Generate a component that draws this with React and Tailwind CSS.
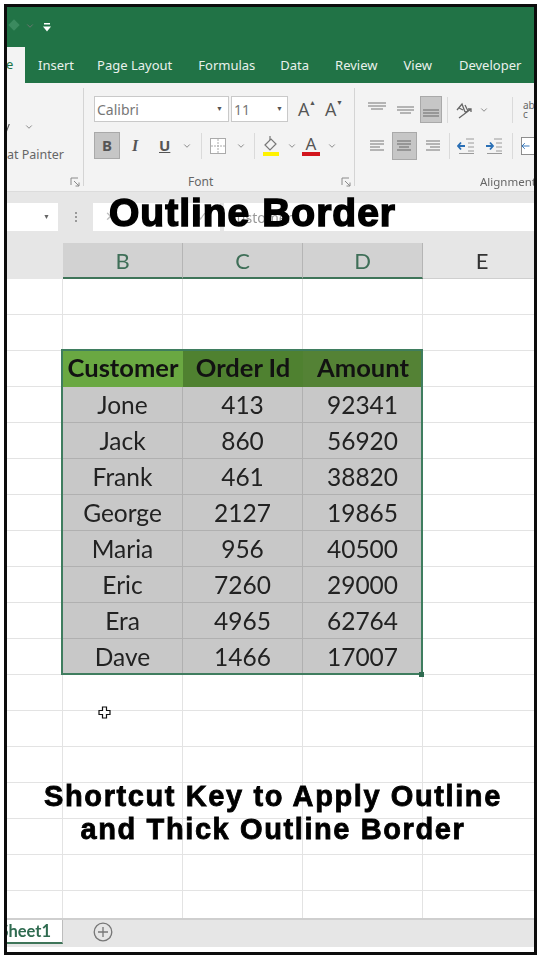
import { ChevronDown } from 'lucide-react'

const tabs = [
  ['Insert', 'ml-[13px]'],
  ['Page Layout', 'ml-[23px]'],
  ['Formulas', 'ml-[26px]'],
  ['Data', 'ml-[25px]'],
  ['Review', 'ml-[26px]'],
  ['View', 'ml-[26px]'],
  ['Developer', 'ml-[27px]'],
]

const datos = [
  ['Jone', '413', '92341'],
  ['Jack', '860', '56920'],
  ['Frank', '461', '38820'],
  ['George', '2127', '19865'],
  ['Maria', '956', '40500'],
  ['Eric', '7260', '29000'],
  ['Era', '4965', '62764'],
  ['Dave', '1466', '17007'],
]

// ─── Iconos del ribbon ────────────────────────────────────────
function Chevron({ className = '' }) {
  return <ChevronDown size={10} strokeWidth={2} className={`shrink-0 text-[#777] ${className}`} />
}

function Lineas({ filas, color = '#8a8a8a', w = 20, h = 20 }) {
  return (
    <svg width={w} height={h} viewBox={`0 0 ${w} ${h}`}>
      {filas.map(([x1, x2, y], i) => (
        <line key={i} x1={x1} x2={x2} y1={y} y2={y} stroke={color} strokeWidth="1.2" />
      ))}
    </svg>
  )
}

function Launcher() {
  return (
    <svg width="10" height="10" viewBox="0 0 10 10" fill="none" stroke="#8a8a8a">
      <path d="M1 8V1h7" />
      <path d="M4 4l5 5M9 5.500V9H5.500" />
    </svg>
  )
}

function Separador({ className = '' }) {
  return <div className={`w-px shrink-0 bg-[#dadada] ${className}`} />
}

function Sangria({ invertida }) {
  return (
    <svg width="18" height="18" viewBox="0 0 18 18" fill="none">
      <path d="M9 2h8M11 6h6M11 10h6M11 14h6M2 16.500h15" stroke="#9a9a9a" strokeWidth="1" />
      {invertida ? (
        <path d="M1 9h7M4 5.500L1 9l3 3.500" stroke="#2a6fb5" strokeWidth="1.800" />
      ) : (
        <path d="M1 9h7M5 5.500L8 9l-3 3.500" stroke="#2a6fb5" strokeWidth="1.800" />
      )}
    </svg>
  )
}

function LetraA({ flecha }) {
  return (
    <div className="relative w-[16px] text-[18px] leading-none text-[#555] font-['Open_Sans',sans-serif]">
      A
      <span className="absolute right-[-2px] top-[-1px] text-[7px] text-[#555]">{flecha}</span>
    </div>
  )
}

// ─── Ribbon ───────────────────────────────────────────────────
function GrupoPortapapeles() {
  return (
    <div className="flex h-full w-[77px] shrink-0 flex-col border-r border-[#d4d4d4]">
      <div className="mt-[30px] flex h-[18px] items-center text-[13px] text-[#555]">
        <span className="w-[19px] -translate-x-[16px] text-right">y</span>
        <Chevron className="ml-[-2px]" />
      </div>
      <div className="mt-[10px] whitespace-nowrap text-[12.500px] leading-[18px] text-[#666]">
        at Painter
      </div>
      <div className="mb-[-3px] mt-auto flex h-[14px] items-center justify-end pr-[3px]">
        <Launcher />
      </div>
    </div>
  )
}

function GrupoFuente() {
  return (
    <div className="flex h-full w-[271px] shrink-0 flex-col border-r border-[#d4d4d4] pl-[10px]">
      <div className="mt-[8px] flex h-[26px] items-center">
        <div className="flex h-full w-[135px] items-center justify-between border border-[#c9c9c9] bg-white pl-[2px] pr-[5px] text-[14px] text-[#777]">
          Calibri
          <span className="text-[7px] text-[#555]">▼</span>
        </div>
        <div className="ml-[2px] flex h-full w-[57px] items-center justify-between border border-[#c9c9c9] bg-white pl-[2px] pr-[4px] text-[14px] text-[#777]">
          11
          <span className="text-[7px] text-[#555]">▼</span>
        </div>
        <div className="ml-[10px]"><LetraA flecha="▲" /></div>
        <div className="ml-[11px]"><LetraA flecha="▼" /></div>
      </div>
      <div className="mt-[10px] flex h-[27px] items-center text-[#555]">
        <div className="flex h-[27px] w-[26px] items-center justify-center border border-[#a9a9a9] bg-[#c6c6c6] text-[15px] font-bold">B</div>
        <span className="ml-[12px] w-[8px] text-[16px] font-bold italic font-['Liberation_Serif',serif]">I</span>
        <span className="ml-[19px] w-[12px] text-[15px] font-bold underline">U</span>
        <Chevron className="ml-[11px]" />
        <Separador className="ml-[9px] h-[26px]" />
        <svg className="ml-[8px]" width="16" height="16" viewBox="0 0 16 16" fill="white" stroke="#aaa">
          <rect x="0.500" y="0.500" width="15" height="15" />
          <path d="M8 1v14M1 8h14" strokeDasharray="2 1" />
        </svg>
        <Chevron className="ml-[10px]" />
        <Separador className="ml-[8px] h-[26px]" />
        <svg className="ml-[7px]" width="18" height="22" viewBox="0 0 18 22" fill="none">
          <path d="M3 10l6-6 5 5-6 6z" stroke="#777" strokeWidth="1.200" />
          <path d="M8 5V1" stroke="#777" strokeWidth="1.200" />
          <rect x="1" y="17" width="16" height="4" fill="#fff200" />
        </svg>
        <Chevron className="ml-[7px]" />
        <div className="relative ml-[5px] flex h-[22px] w-[18px] flex-col items-center">
          <span className="text-[17px] leading-[17px] text-[#555]">A</span>
          <span className="h-[4px] w-[18px] bg-[#d2141c]" />
        </div>
        <Chevron className="ml-[7px]" />
      </div>
      <div className="mb-[-3px] mt-auto flex h-[14px] items-center">
        <span className="ml-[94px] text-[12px] leading-[14px] text-[#666]">Font</span>
        <div className="ml-auto mr-[3px]"><Launcher /></div>
      </div>
    </div>
  )
}

function GrupoAlineacion() {
  return (
    <div className="flex h-full min-w-0 flex-1 flex-col">
      <div className="mt-[8px] flex h-[27px] items-center overflow-hidden">
        <div className="ml-[13px]"><Lineas filas={[[0, 18, 3], [0, 18, 6], [3, 15, 9]]} /></div>
        <div className="ml-[8px]"><Lineas filas={[[1, 18, 7], [1, 18, 10], [4, 15, 13]]} /></div>
        <div className="ml-[4px] flex h-[27px] w-[26px] items-center justify-center border border-[#a9a9a9] bg-[#c6c6c6]">
          <Lineas filas={[[2, 18, 10], [2, 18, 13], [2, 18, 16]]} color="#777" />
        </div>
        <Separador className="ml-[5px] h-[26px]" />
        <svg className="ml-[7px] shrink-0" width="19" height="18" viewBox="0 0 19 18" fill="none" stroke="#666" strokeWidth="1.300">
          <path d="M2 9l5-6 3 8M4 7l4 2M10 4l3 6-3 1M4 17L16 8M13 8h3v3" />
        </svg>
        <Chevron className="ml-[5px]" />
        <Separador className="ml-[23px] h-[26px]" />
        <span className="ml-[10px] text-[10px] leading-[9px] text-[#666]">ab<br />c</span>
      </div>
      <div className="mt-[9px] flex h-[28px] items-center overflow-hidden">
        <div className="ml-[15px]"><Lineas w={16} filas={[[0, 14, 5], [0, 14, 8], [0, 10, 11], [0, 14, 14]]} /></div>
        <div className="ml-[6px] flex h-[28px] w-[26px] items-center justify-center border border-[#a9a9a9] bg-[#c6c6c6]">
          <Lineas w={16} filas={[[1, 15, 5], [1, 15, 8], [3, 13, 11], [1, 15, 14]]} color="#777" />
        </div>
        <div className="ml-[8px]"><Lineas w={16} filas={[[1, 15, 5], [1, 15, 8], [5, 15, 11], [1, 15, 14]]} /></div>
        <Separador className="ml-[8px] h-[26px]" />
        <div className="ml-[7px]"><Sangria invertida /></div>
        <div className="ml-[10px]"><Sangria /></div>
        <Separador className="ml-[9px] h-[26px]" />
        <svg className="ml-[8px]" width="14" height="20" viewBox="0 0 14 20" fill="white" stroke="#888">
          <rect x="0.500" y="1" width="18" height="18" />
          <path d="M1 10h8M4 7l-3 3 3 3" stroke="#2a6fb5" fill="none" />
        </svg>
      </div>
      <div className="mb-[-3px] mt-auto h-[14px] whitespace-nowrap pl-[125px] text-[11.500px] leading-[14px] text-[#666]">Alignment</div>
    </div>
  )
}

// ─── Hoja de cálculo ──────────────────────────────────────────
function FilaVacia() {
  return (
    <div className="grid h-[36px] grid-cols-[56px_120px_120px_120px_1fr]">
      <div className="border-b border-r border-[#e3e3e3]" />
      <div className="border-b border-r border-[#e3e3e3]" />
      <div className="border-b border-r border-[#e3e3e3]" />
      <div className="border-b border-r border-[#e3e3e3]" />
      <div className="border-b border-[#e3e3e3]" />
    </div>
  )
}

function FilaDatos({ celdas }) {
  return (
    <div className="grid h-[36px] grid-cols-[56px_120px_120px_120px_1fr] text-[24.500px] leading-none text-[#222]">
      <div className="border-b border-r border-[#e3e3e3]" />
      {celdas.map((c, i) => (
        <div key={i} className="flex items-center justify-center border-b border-r border-[#b0b0b0] bg-[#c8c8c8] pt-[2px]">
          {c}
        </div>
      ))}
      <div className="border-b border-[#e3e3e3]" />
    </div>
  )
}

export default function App() {
  return (
    <div className="h-[960px] w-[540px] overflow-hidden bg-white pl-[4px] pt-[4px] font-['Noto_Sans',sans-serif]">
      <div className="relative h-[951px] w-[533px] overflow-hidden border-[3px] border-[#0c0c0c] bg-white">
        <div className="flex h-full flex-col blur-[0.4px]">
          {/* Barra verde */}
          <div className="h-[76px] shrink-0 bg-[#217346]">
            <div className="flex h-[40px] items-center">
              <span className="ml-[3px] mt-[-4px] h-[8px] w-[8px] rotate-45 bg-[#3b8a5f]" />
              <Chevron className="ml-[7px] mt-[-3px] text-[#4a9a70]" />
              <svg className="ml-[8px] mt-[1px]" width="8" height="9" viewBox="0 0 8 9" fill="white">
                <rect x="1" y="0" width="6" height="1.500" />
                <path d="M0 3.500h8L4 8.500z" />
              </svg>
            </div>
            <div className="flex h-[36px] items-center text-[13px] text-[#e9f1ec]">
              <div className="flex h-[36px] w-[18px] shrink-0 items-center overflow-hidden bg-[#f3f3f3] text-[#217346]">
                <span className="ml-[-1px]">e</span>
              </div>
              {tabs.map(([t, ml]) => (
                <span key={t} className={`${ml} shrink-0 whitespace-nowrap pt-[2px]`}>{t}</span>
              ))}
            </div>
          </div>

          {/* Ribbon */}
          <div className="flex h-[108px] shrink-0 bg-[#f3f3f3] py-[5px]">
            <GrupoPortapapeles />
            <GrupoFuente />
            <GrupoAlineacion />
          </div>

          {/* Barra de fórmulas */}
          <div className="flex h-[52px] shrink-0 border-t border-[#dcdcdc] bg-[#e6e6e6] pt-[11px]">
            <div className="flex h-[28px] w-[51px] items-center justify-end bg-white pr-[8px] text-[7px] text-[#666]">▼</div>
            <div className="ml-[17px] flex h-[28px] flex-col justify-center gap-[2px]">
              <span className="h-[2px] w-[2px] bg-[#999]" />
              <span className="h-[2px] w-[2px] bg-[#999]" />
              <span className="h-[2px] w-[2px] bg-[#999]" />
            </div>
            <div className="ml-[16px] flex h-[28px] w-[127px] items-center justify-between bg-white px-[12px] text-[13px] text-[#bbb]">
              <span>✕</span>
              <span>✓</span>
            </div>
            <div className="ml-[4px] flex h-[28px] flex-1 items-center bg-white pl-[4px] text-[14px] text-[#999]">Customer</div>
          </div>

          {/* Encabezado de columnas */}
          <div className="grid h-[36px] shrink-0 grid-cols-[56px_120px_120px_120px_1fr] bg-[#e6e6e6] text-[22px] font-['Lato',sans-serif]">
            <div />
            {['B', 'C', 'D'].map(c => (
              <div key={c} className="flex items-center justify-center border-b-2 border-r border-[#3f7559] border-r-[#b5b5b5] bg-[#d2d2d2] text-[#3f6f58]">
                {c}
              </div>
            ))}
            <div className="flex items-center justify-center border-b border-[#cfcfcf] pl-[7px] text-[#333]">E</div>
          </div>

          {/* Celdas */}
          <div className="relative h-[639px] shrink-0 overflow-hidden font-['Lato',sans-serif]">
            <FilaVacia />
            <FilaVacia />
            <div className="grid h-[36px] grid-cols-[56px_120px_120px_120px_1fr] text-[25.500px] leading-none font-bold text-[#121212]">
              <div className="border-b border-r border-[#e3e3e3]" />
              <div className="flex items-center justify-center bg-[#6aa842] pb-[2px]">Customer</div>
              <div className="flex items-center justify-center bg-[#4f8130] pb-[2px]">Order Id</div>
              <div className="flex items-center justify-center bg-[#548235] pb-[2px]">Amount</div>
              <div className="border-b border-[#e3e3e3]" />
            </div>
            {datos.map(d => (
              <FilaDatos key={d[0]} celdas={d} />
            ))}
            {Array.from({ length: 7 }, (_, i) => (
              <FilaVacia key={i} />
            ))}

            {/* Selección y cursor sobre la hoja */}
            <div className="pointer-events-none absolute left-[54px] top-[70px] h-[326px] w-[362px] border-2 border-[#3f7d5f]" />
            <div className="absolute left-[412px] top-[393px] h-[5px] w-[5px] bg-[#2f6b50]" />
            <svg className="absolute left-[91px] top-[427px]" width="13" height="13" viewBox="0 0 13 13" fill="white" stroke="#111" strokeWidth="1.200">
              <path d="M4.500 1h4v3.500H12v4H8.500V12h-4V8.500H1v-4h3.500z" />
            </svg>
          </div>

          {/* Pestañas de hoja */}
          <div className="flex h-[29px] shrink-0 border-t-2 border-[#cfcfcf] bg-[#e6e6e6]">
            <div className="flex h-[24px] w-[56px] shrink-0 items-center justify-end overflow-hidden border-b-2 border-r border-[#3f7559] border-r-[#bdbdbd] bg-white pr-[11px] font-['Lato',sans-serif] text-[16.500px] font-bold whitespace-nowrap text-[#2f6b50]">
              Sheet1
            </div>
            <svg className="ml-[30px] mt-[2px]" width="20" height="20" viewBox="0 0 20 20" fill="none" stroke="#777" strokeWidth="1.300">
              <circle cx="10" cy="10" r="8.800" />
              <path d="M10 5v10M5 10h10" />
            </svg>
          </div>
        </div>

        {/* Textos sobrepuestos */}
        <div className="pointer-events-none absolute left-0 top-[186px] w-full pr-[36px] text-center font-['Liberation_Sans',sans-serif] text-[39px] leading-[40px] font-bold tracking-[1px] text-black [-webkit-text-stroke:1.500px_black]">
          Outline Border
        </div>
        <div className="pointer-events-none absolute left-0 top-[773px] w-full pl-[5px] text-center font-['Liberation_Sans',sans-serif] text-[29px] leading-[33px] font-bold tracking-[1.600px] text-black [-webkit-text-stroke:0.800px_black]">
          Shortcut Key to Apply Outline
          <br />
          and Thick Outline Border
        </div>
      </div>
    </div>
  )
}
